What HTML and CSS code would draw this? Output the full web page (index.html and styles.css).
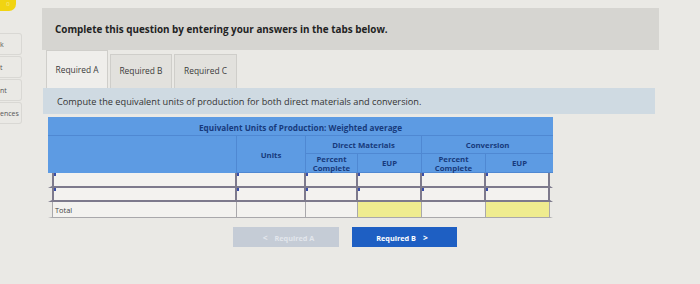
FILE: index.html
```html
<!DOCTYPE html>
<html>
<head>
<meta charset="utf-8">
<link rel="stylesheet" href="styles.css">
</head>
<body>
<div class="page">
  <div class="badge">0</div>
  <nav class="sidebar">
    <div class="side-item">k</div>
    <div class="side-item">t</div>
    <div class="side-item">nt</div>
    <div class="side-item">ences</div>
  </nav>
  <main class="main">
    <div class="header">Complete this question by entering your answers in the tabs below.</div>
    <div class="tabs">
      <div class="tab tab-active">Required A</div>
      <div class="tab tab-b">Required B</div>
      <div class="tab tab-c">Required C</div>
    </div>
    <div class="instr">Compute the equivalent units of production for both direct materials and conversion.</div>
    <table class="eup">
      <colgroup>
        <col class="c-label"><col class="c-units"><col class="c-dmp"><col class="c-dme"><col class="c-cvp"><col class="c-cve">
      </colgroup>
      <thead>
        <tr class="h1"><th colspan="6">Equivalent Units of Production: Weighted average</th></tr>
        <tr class="h2">
          <th rowspan="2" class="h-label"></th>
          <th rowspan="2" class="h-units">Units</th>
          <th colspan="2">Direct Materials</th>
          <th colspan="2" class="h-last">Conversion</th>
        </tr>
        <tr class="h3">
          <th>Percent<br>Complete</th>
          <th>EUP</th>
          <th>Percent<br>Complete</th>
          <th class="h-last">EUP</th>
        </tr>
      </thead>
      <tbody>
        <tr class="r-in r1">
          <td class="first"><span class="mk"></span></td>
          <td><span class="mk"></span></td>
          <td><span class="mk"></span></td>
          <td><span class="mk"></span></td>
          <td><span class="mk"></span></td>
          <td class="last"><span class="mk"></span></td>
        </tr>
        <tr class="r-in r2">
          <td class="first"><span class="mk"></span></td>
          <td><span class="mk"></span></td>
          <td><span class="mk"></span></td>
          <td><span class="mk"></span></td>
          <td><span class="mk"></span></td>
          <td class="last"><span class="mk"></span></td>
        </tr>
        <tr class="r-total">
          <td class="first">Total</td>
          <td></td>
          <td></td>
          <td class="yel"></td>
          <td></td>
          <td class="last yel"></td>
        </tr>
      </tbody>
    </table>
    <div class="buttons">
      <button class="btn btn-prev"><span class="chev">&lt;</span> Required A</button>
      <button class="btn btn-next">Required B <span class="chev">&gt;</span></button>
    </div>
  </main>
</div>
</body>
</html>
```

FILE: styles.css
```css
html, body {
  margin: 0;
  padding: 0;
}
body {
  width: 700px;
  height: 284px;
  overflow: hidden;
  background: #eae9e5;
  font-family: "Open Sans", "Noto Sans", sans-serif;
  color: #2a2a2a;
}
.page {
  position: relative;
  display: flex;
  align-items: flex-start;
}
.badge {
  position: absolute;
  left: 0;
  top: 0;
  width: 16px;
  height: 11px;
  border-radius: 0 0 7px 0;
  background: #f1d411;
  color: #f8ea9a;
  font-size: 6px;
  line-height: 9px;
  text-align: center;
}
.sidebar {
  width: 22px;
  padding-top: 33px;
  display: flex;
  flex-direction: column;
  gap: 1px;
}
.side-item {
  height: 20px;
  border: 1px solid #d9d8d4;
  border-left: none;
  border-radius: 0 3px 3px 0;
  font-size: 7px;
  color: #555;
  display: flex;
  align-items: center;
  white-space: nowrap;
}
.main {
  margin-left: 20px;
  width: 617px;
  padding-top: 8px;
}
.header {
  height: 42px;
  background: #d6d5d1;
  padding-left: 13px;
  display: flex;
  align-items: center;
  font-size: 9.9px;
  font-weight: 700;
  color: #232323;
}
.tabs {
  display: flex;
  align-items: flex-end;
  gap: 2px;
  margin-left: 4px;
  margin-top: 0;
  height: 38px;
}
.tab {
  box-sizing: border-box;
  height: 34px;
  background: #e2e1dd;
  border: 1px solid #cfceca;
  border-bottom: none;
  font-size: 8.4px;
  color: #3a3a3a;
  display: flex;
  align-items: center;
  justify-content: center;
  padding-bottom: 3px;
}
.tab-active {
  height: 38px;
  width: 62px;
  background: #efeeeb;
  padding-bottom: 0;
}
.tab-b { width: 62px; }
.tab-c { width: 63px; }
.instr {
  margin-left: 1px;
  width: 598px;
  height: 26px;
  background: #cfdae2;
  padding-left: 14px;
  display: flex;
  align-items: center;
  font-size: 9.2px;
  color: #333;
}
.eup {
  margin-left: 6px;
  margin-top: 3px;
  border-spacing: 0;
  border-collapse: separate;
  table-layout: fixed;
  width: 505px;
}
.c-label { width: 189px; }
.c-units { width: 69px; }
.c-dmp { width: 52px; }
.c-dme { width: 64px; }
.c-cvp { width: 64px; }
.c-cve { width: 67px; }
.eup th {
  background: #5d9be3;
  color: #173a7c;
  font-size: 7.8px;
  font-weight: 700;
  line-height: 9px;
  padding: 0;
  border-right: 1px solid #4f88d2;
  border-bottom: 1px solid #4f88d2;
  text-align: center;
}
.eup th.h-last { border-right: none; }
.eup .h1 th {
  height: 15px;
  padding-top: 3px;
  border-right: none;
  font-size: 8.2px;
}
.eup .h2 th { height: 15px; padding-top: 2px; }
.eup .h3 th { height: 17px; padding-top: 1px; line-height: 8.5px; }
.eup th.h-units {
  vertical-align: top;
  padding-top: 15px;
  font-size: 7.8px;
}
.eup th.h-label { border-bottom: none; }
.eup td {
  padding: 0;
  background: #f3f2ef;
  background-clip: padding-box;
  border-right: 2px solid #7d7a8c;
  border-bottom: 2px solid #7d7a8c;
  position: relative;
  font-size: 7.4px;
  color: #444;
}
.eup td.first {
  border-left: 4px solid #eae9e5;
  box-shadow: inset 2px 0 0 #7d7a8c;
  padding-left: 3px;
}
.eup td.last {
  border-right: 3px solid #eae9e5;
  box-shadow: inset -2px 0 0 #7d7a8c;
}
.eup .r1 td { height: 13px; }
.eup .r2 td { height: 12px; }
.eup .r-total td {
  height: 15px;
  border-right-width: 1px;
  border-bottom: 1px solid #a9a8ab;
  border-right-color: #a9a8ab;
}
.eup .r-total td.first {
  box-shadow: inset 1px 0 0 #a9a8ab;
}
.eup .r-total td.last {
  border-right: 3px solid #eae9e5;
  box-shadow: inset -1px 0 0 #a9a8ab;
}
.eup td.yel {
  background: #efec8f;
}
.mk {
  position: absolute;
  left: 0;
  top: 0;
  width: 2px;
  height: 3px;
  background: #3a4fa8;
}
.eup td.first .mk { left: 2px; }
.buttons {
  display: flex;
  gap: 13px;
  margin-left: 191px;
  margin-top: 9px;
}
.btn {
  border: none;
  height: 20px;
  width: 106px;
  font-family: "Open Sans", "Noto Sans", sans-serif;
  font-size: 7.3px;
  font-weight: 700;
  padding: 0;
}
.btn-prev {
  background: #c5ccd6;
  color: #e2e6ec;
}
.btn-next {
  background: #1e5fc3;
  color: #ffffff;
  width: 105px;
}
.chev {
  font-size: 8.5px;
  margin: 0 5px;
}
```
